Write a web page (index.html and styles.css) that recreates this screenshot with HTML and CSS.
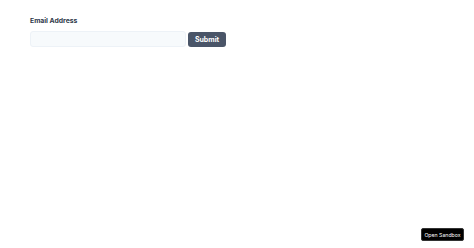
FILE: index.html
```html
<!DOCTYPE html>
<html>
<head>
<meta charset="utf-8">
<link rel="stylesheet" href="styles.css">
</head>
<body>
<main class="page">
  <form class="form">
    <label class="label" for="email">Email Address</label>
    <div class="row">
      <input class="input" id="email" type="email">
      <button class="submit" type="button">Submit</button>
    </div>
  </form>
</main>
<a class="sandbox">Open Sandbox</a>
</body>
</html>
```
FILE: styles.css
```css
html, body {
  margin: 0;
  padding: 0;
  background: #ffffff;
  width: 474px;
  height: 248px;
  overflow: hidden;
  font-family: Inter, "Noto Sans", sans-serif;
}
.page {
  padding: 16px 30px;
}
.form {
  display: flex;
  flex-direction: column;
  gap: 5px;
}
.label {
  font-size: 6.8px;
  font-weight: 700;
  color: #2d3748;
  line-height: 10px;
}
.row {
  display: flex;
  gap: 2px;
  align-items: center;
}
.input {
  width: 156px;
  height: 16px;
  box-sizing: border-box;
  border: 1px solid #edf2f7;
  border-radius: 3px;
  background: #f7fafc;
  padding: 0 4px;
  margin: 0;
  outline: none;
}
.submit {
  width: 38px;
  height: 15px;
  box-sizing: border-box;
  border: none;
  border-radius: 3px;
  background: #4a5568;
  color: #ffffff;
  font-family: Inter, "Noto Sans", sans-serif;
  font-size: 7px;
  font-weight: 700;
  padding: 0;
  margin: 0;
}
.sandbox {
  position: absolute;
  left: 421px;
  top: 228px;
  width: 43px;
  height: 13px;
  box-sizing: border-box;
  background: #000000;
  color: #ffffff;
  border: 1px solid #333;
  border-radius: 2px;
  font-size: 5.2px;
  display: flex;
  align-items: center;
  justify-content: center;
}
```
